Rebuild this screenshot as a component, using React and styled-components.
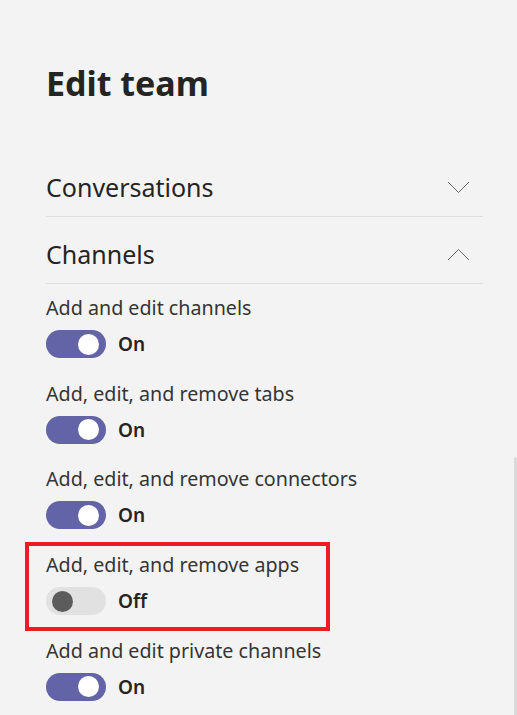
import React, { useState } from "react";
import styled, { createGlobalStyle } from "styled-components";

const GlobalStyle = createGlobalStyle`
  html, body {
    margin: 0;
    padding: 0;
    background: #f3f3f3;
  }
  body {
    font-family: "Noto Sans", "Open Sans", sans-serif;
    color: #323130;
  }
`;

const sections = [
  { id: "conversations", title: "Conversations", open: false },
  { id: "channels", title: "Channels", open: true },
];

const channelSettings = [
  { label: "Add and edit channels", on: true },
  { label: "Add, edit, and remove tabs", on: true },
  { label: "Add, edit, and remove connectors", on: true },
  { label: "Add, edit, and remove apps", on: false, highlight: true },
  { label: "Add and edit private channels", on: true },
];

const Chevron = ({ up }) => (
  <svg width="23" height="13" viewBox="0 0 23 13" fill="none">
    <path
      d={up ? "M1 12L11.5 1.5L22 12" : "M1 1L11.5 11.5L22 1"}
      stroke="#6b6967"
      strokeWidth="1"
    />
  </svg>
);

const App = () => {
  const [settings, setSettings] = useState(channelSettings);

  const flip = (i) => {
    setSettings((s) => s.map((item, j) => (j === i ? { ...item, on: !item.on } : item)));
  };

  return (
    <>
      <GlobalStyle />
      <Page>
        <Title>Edit team</Title>
        {sections.map((section) => (
          <div key={section.id}>
            <Header>
              <HeaderText>{section.title}</HeaderText>
              <Chevron up={section.open} />
            </Header>
            {section.open && (
              <List>
                {settings.map((item, i) => (
                  <Item key={item.label} highlight={item.highlight}>
                    <Label>{item.label}</Label>
                    <ToggleRow onClick={() => flip(i)}>
                      <Track on={item.on}>
                        <Knob on={item.on} />
                      </Track>
                      <State>{item.on ? "On" : "Off"}</State>
                    </ToggleRow>
                  </Item>
                ))}
              </List>
            )}
          </div>
        ))}
      </Page>
      <ScrollThumb />
    </>
  );
};

const Page = styled.div`
  padding: 59px 34px 0 46px;
  height: 715px;
  box-sizing: border-box;
  overflow: hidden;
`;

const Title = styled.h1`
  margin: 0 0 43px;
  font-size: 34px;
  line-height: 48px;
  font-weight: 700;
  color: #252423;
`;

const Header = styled.div`
  display: flex;
  align-items: center;
  justify-content: space-between;
  padding: 19px 13px 11px 0;
  border-bottom: 1px solid #dedede;
`;

const HeaderText = styled.div`
  font-size: 25px;
  line-height: 36px;
  color: #252423;
`;

const List = styled.div`
  display: flex;
  flex-direction: column;
  padding-top: 10px;
`;

const Item = styled.div`
  position: relative;
  display: flex;
  flex-direction: column;
  gap: 8px;
  padding-bottom: 21.7px;

  &::after {
    content: "";
    display: ${(p) => (p.highlight ? "block" : "none")};
    position: absolute;
    left: -21px;
    top: -9px;
    width: 305px;
    height: 89px;
    box-sizing: border-box;
    border: 4px solid #ed1c24;
    pointer-events: none;
  }
`;

const Label = styled.div`
  font-size: 19.7px;
  line-height: 28px;
  color: #363534;
`;

const ToggleRow = styled.div`
  display: flex;
  align-items: center;
  gap: 12px;
  cursor: pointer;
`;

const Track = styled.div`
  width: 60px;
  height: 28px;
  border-radius: 14px;
  background: ${(p) => (p.on ? "#6264a7" : "#e1e1e1")};
  display: flex;
  align-items: center;
  justify-content: ${(p) => (p.on ? "flex-end" : "flex-start")};
  padding: 0 7px 0 6px;
  box-sizing: border-box;
`;

const Knob = styled.div`
  width: 21px;
  height: 21px;
  border-radius: 50%;
  background: ${(p) => (p.on ? "#ffffff" : "#5c5c5c")};
`;

const State = styled.span`
  font-size: 19px;
  line-height: 28px;
  font-weight: 600;
  color: #252423;
`;

const ScrollThumb = styled.div`
  position: fixed;
  right: 0;
  top: 457px;
  bottom: 0;
  width: 3px;
  background: #dadada;
  border-radius: 2px 0 0 0;
`;

export default App;
